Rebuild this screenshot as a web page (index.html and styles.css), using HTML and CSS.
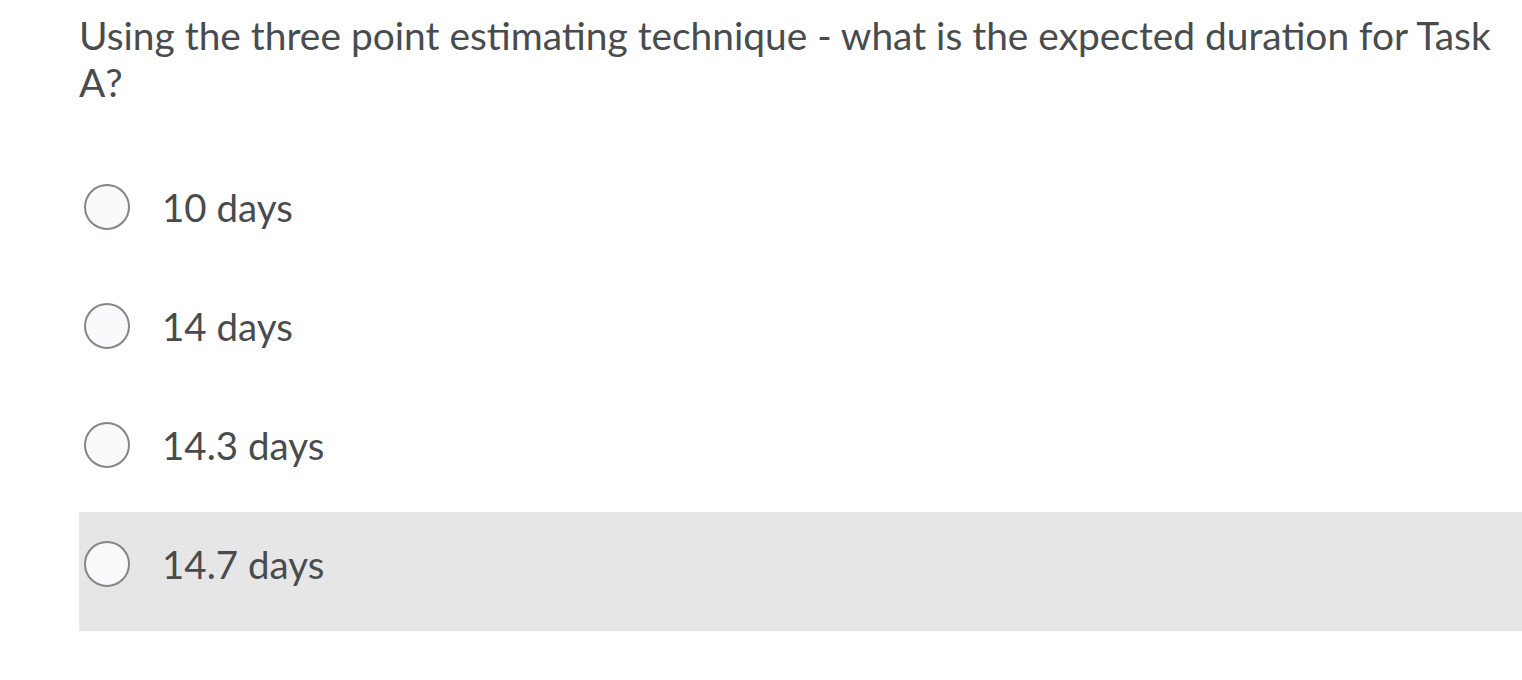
FILE: index.html
```html
<!DOCTYPE html>
<html lang="en">
<head>
<meta charset="utf-8">
<link rel="stylesheet" href="styles.css">
<title>Question</title>
</head>
<body>
<div class="question">
  <p class="prompt">Using the three point estimating technique - what is the expected duration for Task A?</p>
  <ul class="options">
    <li class="option"><span class="radio"></span><span class="label">10 days</span></li>
    <li class="option"><span class="radio"></span><span class="label">14 days</span></li>
    <li class="option"><span class="radio"></span><span class="label">14.3 days</span></li>
    <li class="option option-hover"><span class="radio"></span><span class="label">14.7 days</span></li>
  </ul>
</div>
</body>
</html>
```
FILE: styles.css
```css
html, body {
  margin: 0;
  padding: 0;
  background: #ffffff;
}
body {
  font-family: Lato, "Open Sans", sans-serif;
  color: #494c4e;
}
.question {
  padding: 12px 0 0 79px;
}
.prompt {
  margin: 0;
  font-size: 38.9px;
  line-height: 47px;
  padding-right: 20px;
}
.options {
  list-style: none;
  margin: 49px 0 0 0;
  padding: 0;
}
.option {
  box-sizing: border-box;
  display: flex;
  align-items: center;
  height: 119px;
  padding: 0 0 15px 5px;
}
.option-hover {
  background: #e6e6e6;
}
.radio {
  box-sizing: border-box;
  width: 46px;
  height: 46px;
  border: 2px solid #868686;
  border-radius: 50%;
  background: #f9fafb;
  flex: none;
}
.label {
  margin-left: 32px;
  font-size: 38.5px;
}
```
